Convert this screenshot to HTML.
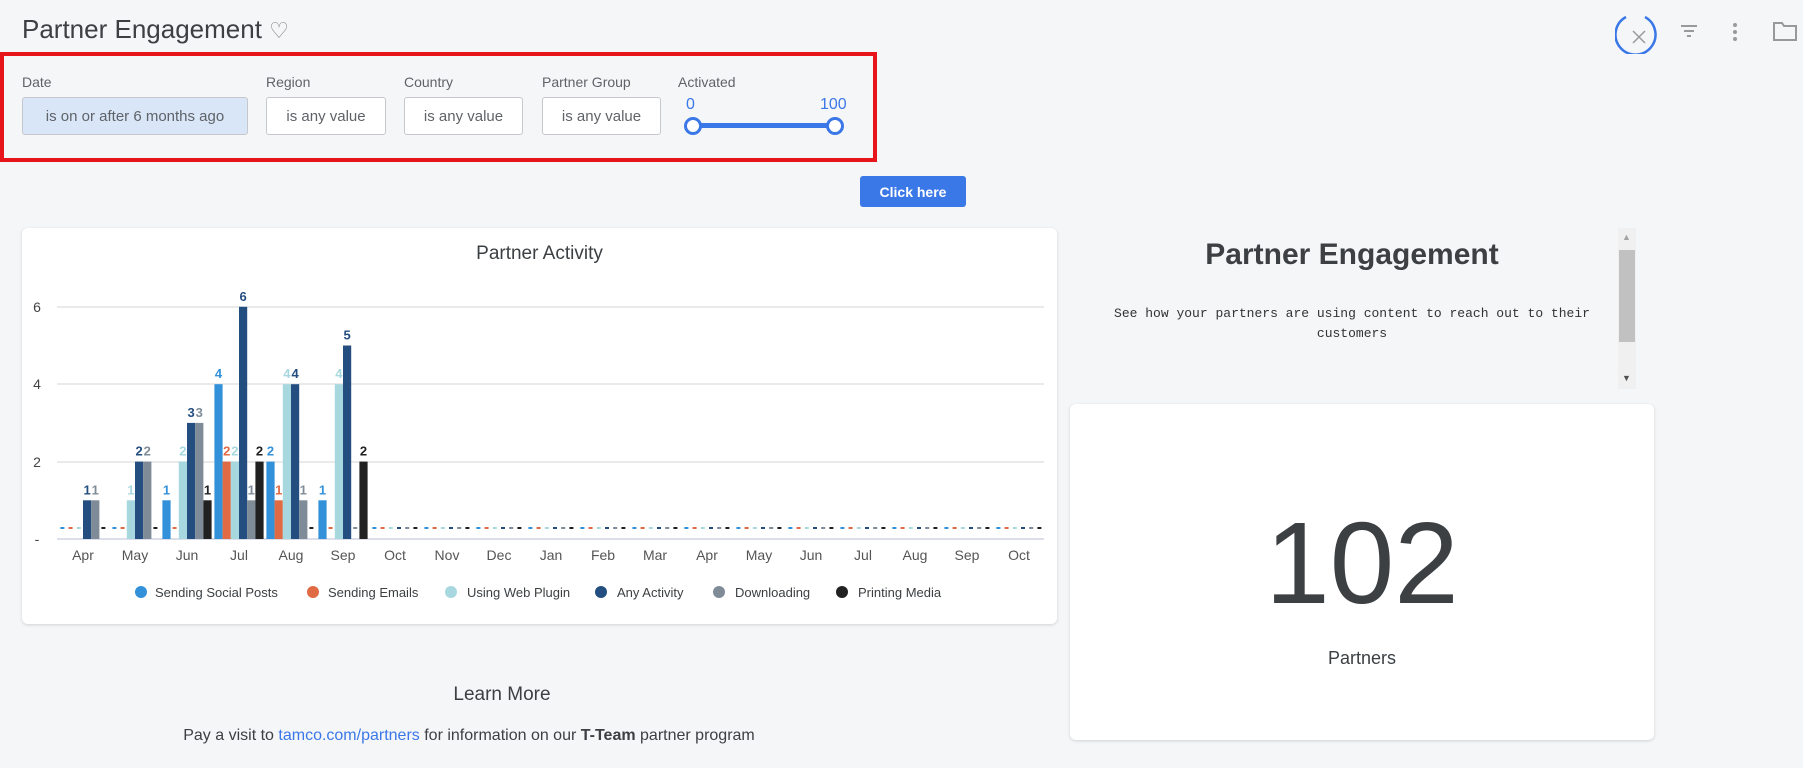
<!DOCTYPE html>
<html><head><meta charset="utf-8"><style>
body{margin:0;width:1803px;height:768px;background:#f5f6f8;font-family:"Liberation Sans",Arial,sans-serif;color:#3c4043;position:relative;overflow:hidden}
.a{position:absolute}
.lbl{position:absolute;top:74px;font-size:14px;color:#5f6368}
.inp{position:absolute;top:97px;height:38px;border:1px solid #c6c8cc;border-radius:3px;background:#fff;font-size:15px;color:#5f6368;display:flex;align-items:center;justify-content:center;box-sizing:border-box}
</style></head><body>
<div class="a" style="left:22px;top:14px;font-size:26px;color:#3c4043">Partner Engagement <span style="font-size:22px;color:#888">♡</span></div>
<div class="a" style="left:0;top:52px;width:869px;height:102px;border:4px solid #e8141c"></div>
<div class="lbl" style="left:22px">Date</div>
<div class="lbl" style="left:266px">Region</div>
<div class="lbl" style="left:404px">Country</div>
<div class="lbl" style="left:542px">Partner Group</div>
<div class="lbl" style="left:678px">Activated</div>
<div class="inp" style="left:22px;width:226px;background:#d9e6f8">is on or after 6 months ago</div>
<div class="inp" style="left:266px;width:120px">is any value</div>
<div class="inp" style="left:404px;width:119px">is any value</div>
<div class="inp" style="left:542px;width:119px">is any value</div>
<div class="a" style="left:686px;top:96px;color:#3b78e7;font-size:16px">0</div>
<div class="a" style="left:820px;top:96px;color:#3b78e7;font-size:16px">100</div>
<div class="a" style="left:692px;top:123px;width:142px;height:5px;background:#3b78e7"></div>
<div class="a" style="left:684px;top:117px;width:12px;height:12px;border:3px solid #3b78e7;border-radius:50%;background:#fff"></div>
<div class="a" style="left:826px;top:117px;width:12px;height:12px;border:3px solid #3b78e7;border-radius:50%;background:#fff"></div>
<div class="a" style="left:860px;top:176px;width:106px;height:31px;background:#3b78e7;border-radius:3px;color:#fff;font-weight:bold;font-size:14px;display:flex;align-items:center;justify-content:center">Click here</div>
<svg class="a" style="left:1615px;top:8px" width="50" height="46"><path d="M11 9 A20 20 0 1 0 30 9" fill="none" stroke="#3b78e7" stroke-width="2.5"/><path d="M18 23l12 12M30 23l-12 12" stroke="#999" stroke-width="1.5"/></svg>
<svg class="a" style="left:1678px;top:22px" width="24" height="20"><path d="M3 4h16M6 9h10M9 14h4" stroke="#999" stroke-width="2"/></svg>
<svg class="a" style="left:1730px;top:20px" width="10" height="24"><circle cx="5" cy="5" r="2" fill="#999"/><circle cx="5" cy="12" r="2" fill="#999"/><circle cx="5" cy="19" r="2" fill="#999"/></svg>
<svg class="a" style="left:1772px;top:20px" width="26" height="22"><path d="M2 3h8l2 3h12v14H2z" fill="none" stroke="#999" stroke-width="2"/></svg>

<div class="a" style="left:22px;top:228px;width:1035px;height:396px;background:#fff;border-radius:6px;box-shadow:0 1px 3px rgba(0,0,0,.15)"></div>
<div class="a" style="left:22px;top:243px;width:1035px;text-align:center;font-size:19px;color:#3c4043">Partner Activity</div>
<svg class="a" style="left:0;top:0" width="1060" height="640" font-family="Liberation Sans, Arial, sans-serif">
<g stroke="#e3e3e3" stroke-width="1.5"><line x1="57" x2="1044" y1="307" y2="307"/><line x1="57" x2="1044" y1="384" y2="384"/><line x1="57" x2="1044" y1="462" y2="462"/><line x1="57" x2="1044" y1="539" y2="539" stroke="#d0d4e4"/></g>
<g font-size="14" fill="#444" text-anchor="middle"><text x="37" y="312">6</text><text x="37" y="389">4</text><text x="37" y="467">2</text><text x="37" y="544">-</text></g>
<g id="bars"></g>
<g font-size="14" fill="#555" text-anchor="middle" id="months"></g>
<g font-size="13" fill="#3c4043">
<circle cx="141" cy="592" r="6" fill="#3391da"/><text x="155" y="597">Sending Social Posts</text>
<circle cx="313" cy="592" r="6" fill="#e06a43"/><text x="328" y="597">Sending Emails</text>
<circle cx="451" cy="592" r="6" fill="#a8d8df"/><text x="467" y="597">Using Web Plugin</text>
<circle cx="601" cy="592" r="6" fill="#254e80"/><text x="617" y="597">Any Activity</text>
<circle cx="719" cy="592" r="6" fill="#7f8c97"/><text x="735" y="597">Downloading</text>
<circle cx="842" cy="592" r="6" fill="#212121"/><text x="858" y="597">Printing Media</text>
</g>
</svg>
<script>
(function(){var ns="http://www.w3.org/2000/svg";var b=document.getElementById("bars"),m=document.getElementById("months");
var cols=["#3391da","#e06a43","#a8d8df","#254e80","#7f8c97","#212121"];
var names=["Apr","May","Jun","Jul","Aug","Sep","Oct","Nov","Dec","Jan","Feb","Mar","Apr","May","Jun","Jul","Aug","Sep","Oct"];
var d=[[0,0,0,1,1,0],[0,0,1,2,2,0],[1,0,2,3,3,1],[4,2,2,6,1,2],[2,1,4,4,1,0],[1,0,4,5,0,2]];
function el(t,a,p){var e=document.createElementNS(ns,t);for(var k in a)e.setAttribute(k,a[k]);p.appendChild(e);return e}
for(var i=0;i<19;i++){var c=83+i*52;var t=el("text",{x:c,y:560},m);t.textContent=names[i];
var row=d[i]||[0,0,0,0,0,0];
for(var j=0;j<6;j++){var x=c-24.6+j*8.2,v=row[j];
if(v>0){var h=v*38.7;el("rect",{x:x,y:539-h,width:8.2,height:h,fill:cols[j]},b);
var tt=el("text",{x:x+4.1,y:539-h-6,"font-size":13,"font-weight":"bold","text-anchor":"middle",fill:cols[j]},b);tt.textContent=v;}
else el("rect",{x:x+2,y:527,width:4,height:2,fill:cols[j]},b);}}})();
</script>

<div class="a" style="left:1000px;top:238px;width:704px;text-align:center;font-size:30px;font-weight:bold;color:#3c4043">Partner Engagement</div>
<div class="a" style="left:1100px;top:304px;width:504px;text-align:center;font-family:'Liberation Mono',monospace;font-size:13px;line-height:20px;color:#333">See how your partners are using content to reach out to their customers</div>
<div class="a" style="left:1618px;top:228px;width:18px;height:161px;background:#f0f0f0"></div>
<div class="a" style="left:1619px;top:250px;width:16px;height:92px;background:#c1c1c1"></div>
<div class="a" style="left:1622px;top:232px;font-size:9px;color:#a3a3a3">▲</div>
<div class="a" style="left:1622px;top:373px;font-size:9px;color:#505050">▼</div>

<div class="a" style="left:1070px;top:404px;width:584px;height:336px;background:#fff;border-radius:6px;box-shadow:0 1px 3px rgba(0,0,0,.15)"></div>
<div class="a" style="left:1070px;top:498px;width:584px;text-align:center;font-size:116px;line-height:130px;color:#3c4043">102</div>
<div class="a" style="left:1070px;top:648px;width:584px;text-align:center;font-size:18px;color:#3c4043">Partners</div>

<div class="a" style="left:22px;top:684px;width:960px;text-align:center;font-size:19px">Learn More</div>
<div class="a" style="left:0px;top:727px;width:938px;text-align:center;font-size:16px">Pay a visit to <span style="color:#3b78e7">tamco.com/partners</span> for information on our <b>T-Team</b> partner program</div>
</body></html>
